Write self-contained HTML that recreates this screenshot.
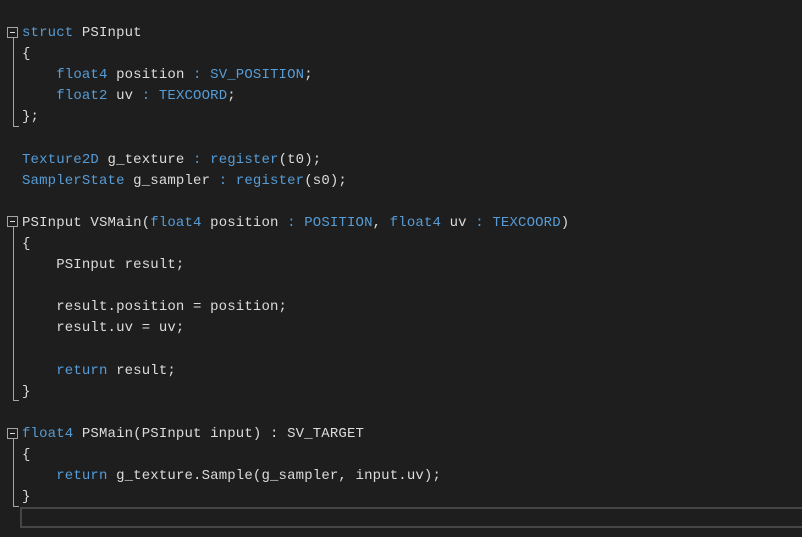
<!DOCTYPE html>
<html><head><meta charset="utf-8"><style>
html,body{margin:0;padding:0;background:#1e1e1e;width:802px;height:537px;overflow:hidden;position:relative}
.code{position:absolute;left:22px;top:23px;font-family:"Liberation Mono","Noto Sans CJK SC",monospace;font-size:14px;line-height:21.1px;color:#dcdcdc;white-space:pre;letter-spacing:0.15px}
.k{color:#569cd6}
.g{position:absolute;background:#a5a5a5}
.box{position:absolute;left:7px;width:9px;height:9px;border:1px solid #a5a5a5;box-sizing:content-box}
.box:after{content:"";position:absolute;left:2px;top:4px;width:5px;height:1px;background:#dcdcdc}
.cur{position:absolute;left:20px;top:507px;width:790px;height:17px;border:2px solid #464646}
</style></head><body>
<div class="box" style="top:27px"></div>
<div class="g" style="left:13px;top:38px;width:1px;height:89px"></div>
<div class="g" style="left:13px;top:126px;width:6px;height:1px"></div>
<div class="box" style="top:216px"></div>
<div class="g" style="left:13px;top:227px;width:1px;height:174px"></div>
<div class="g" style="left:13px;top:400px;width:6px;height:1px"></div>
<div class="box" style="top:428px"></div>
<div class="g" style="left:13px;top:439px;width:1px;height:68px"></div>
<div class="g" style="left:13px;top:506px;width:6px;height:1px"></div>
<div class="cur"></div>
<div class="code"><span class="k">struct</span> PSInput
{
    <span class="k">float4</span> position <span class="k">: SV_POSITION</span>;
    <span class="k">float2</span> uv <span class="k">: TEXCOORD</span>;
};

<span class="k">Texture2D</span> g_texture <span class="k">: register</span>(t0);
<span class="k">SamplerState</span> g_sampler <span class="k">: register</span>(s0);

PSInput VSMain(<span class="k">float4</span> position <span class="k">: POSITION</span>, <span class="k">float4</span> uv <span class="k">: TEXCOORD</span>)
{
    PSInput result;

    result.position = position;
    result.uv = uv;

    <span class="k">return</span> result;
}

<span class="k">float4</span> PSMain(PSInput input) : SV_TARGET
{
    <span class="k">return</span> g_texture.Sample(g_sampler, input.uv);
}</div>
</body></html>
